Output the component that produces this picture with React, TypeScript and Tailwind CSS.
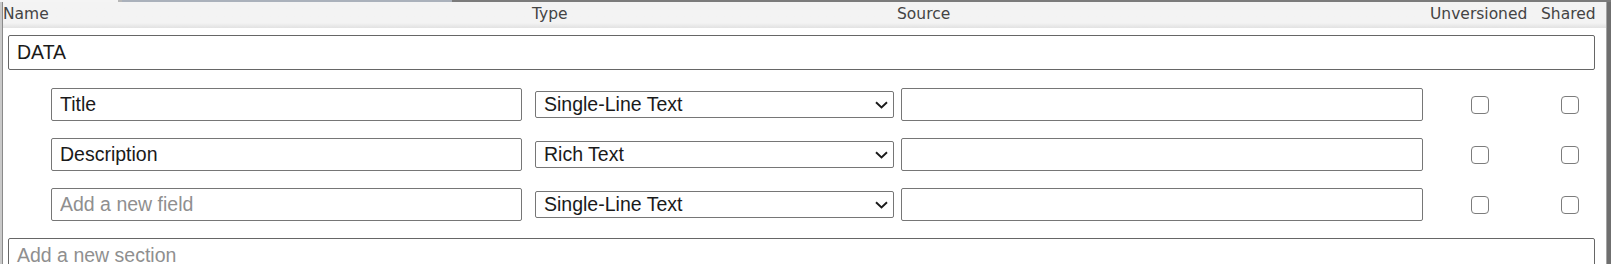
const headerFont = { fontFamily: '"DejaVu Sans", Verdana, sans-serif' };

type Field = { name: string; type: string; placeholder?: boolean };

const fields: Field[] = [
  { name: "Title", type: "Single-Line Text" },
  { name: "Description", type: "Rich Text" },
  { name: "Add a new field", type: "Single-Line Text", placeholder: true },
];

function Chevron() {
  return (
    <svg
      width="13"
      height="8"
      viewBox="0 0 13 8"
      className="pointer-events-none absolute right-[6px] top-1/2 -translate-y-1/2"
    >
      <path d="M1 1.2 L6.5 6.5 L12 1.2" fill="none" stroke="#1a1a1a" strokeWidth="1.9" />
    </svg>
  );
}

function Box() {
  return (
    <div
      role="checkbox"
      aria-checked="false"
      className="h-[18px] w-[18px] shrink-0 rounded-[4px] border-[1.6px] border-[#7c7c7c] bg-white"
    />
  );
}

function FieldRow({ field }: { field: Field }) {
  return (
    <div className="flex h-[33px] items-center pl-[48px]">
      <input
        readOnly
        value={field.placeholder ? "" : field.name}
        placeholder={field.placeholder ? field.name : undefined}
        className="h-[33px] w-[471px] rounded-[2px] border border-[#767676] bg-white pl-[8px] text-[19.5px] text-[#1a1a1a] outline-none placeholder:text-[#8f8f8f]"
      />
      <div className="relative ml-[13px] h-[27px] w-[359px]">
        <select
          defaultValue={field.type}
          className="h-[27px] w-full appearance-none rounded-[2px] border border-[#767676] bg-white pl-[8px] text-[19.5px] leading-[25px] text-[#1a1a1a] outline-none"
        >
          <option>Single-Line Text</option>
          <option>Rich Text</option>
          <option>Multi-Line Text</option>
        </select>
        <Chevron />
      </div>
      <input
        readOnly
        className="ml-[7px] h-[33px] w-[522px] rounded-[2px] border border-[#767676] bg-white outline-none"
      />
      <div className="ml-[48px]">
        <Box />
      </div>
      <div className="ml-[72px]">
        <Box />
      </div>
    </div>
  );
}

export default function App() {
  return (
    <div
      className="flex h-[264px] w-[1611px] flex-col overflow-hidden bg-white"
      style={{ fontFamily: '"Liberation Sans", Arial, sans-serif' }}
    >
      {/* tab strip edge */}
      <div className="flex h-[2px] shrink-0">
        <div className="w-[118px] bg-[#f4f4f4]" />
        <div className="w-[4px] bg-[#b7b7b7]" />
        <div className="w-[330px] bg-[#aab1bb]" />
        <div className="flex-1 bg-[#7b7b7b]" />
      </div>

      <div className="flex flex-1">
        <div className="w-[2px] bg-[#c9c9c9]" />
        <div className="w-[1px] bg-[#8a8a8a]" />

        <div className="flex flex-1 flex-col">
          <div
            className="flex h-[26px] shrink-0 items-center bg-gradient-to-b from-[#f3f3f3] from-80% to-[#e2e2e2] text-[15.5px] text-[#444]"
            style={headerFont}
          >
            <div className="w-[529px]">Name</div>
            <div className="w-[365px]">Type</div>
            <div className="w-[533px]">Source</div>
            <div className="w-[111px]">Unversioned</div>
            <div>Shared</div>
          </div>

          <div className="ml-[5px] mr-[11px] mt-[7px] flex h-[35px] items-center rounded-[2px] border border-[#666] pl-[8px] text-[19.5px] text-[#1a1a1a]">
            DATA
          </div>

          <div className="mt-[18px] flex flex-col gap-[17px]">
            {fields.map((f) => (
              <FieldRow key={f.name} field={f} />
            ))}
          </div>

          <div className="ml-[5px] mr-[11px] mt-[17px] flex h-[35px] shrink-0 items-center rounded-[2px] border border-[#666] pl-[8px] text-[19.5px] text-[#8f8f8f]">
            Add a new section
          </div>
        </div>

        <div className="w-[1px] bg-[#a5a5a5]" />
        <div className="w-[4px] bg-[#6f6f6f]" />
      </div>
    </div>
  );
}
